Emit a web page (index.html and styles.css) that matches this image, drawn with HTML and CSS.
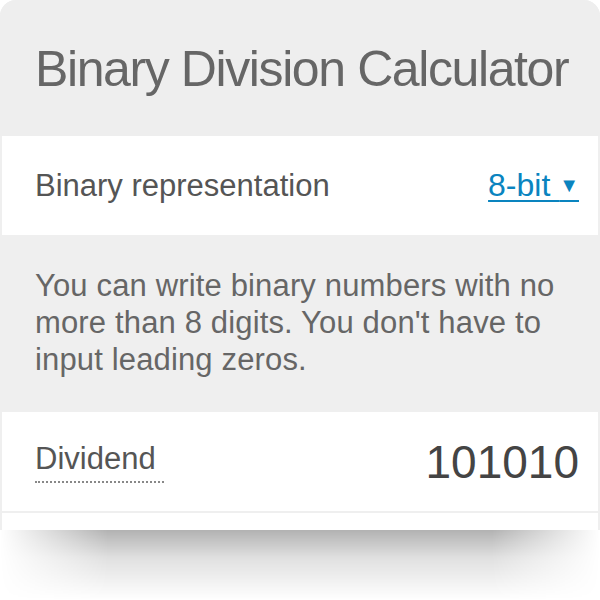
FILE: index.html
```html
<!DOCTYPE html>
<html>

<head>
	<title>Binary Division Calculator</title>
	<link rel="stylesheet" href="styles.css">
</head>

<body>
	<div class="card">
		<div class="card-header">
			<h1>Binary Division Calculator</h1>
		</div>

		<div class="row">
			<span class="label">Binary representation</span>
			<a class="select" href="#">8-bit <span class="arrow">&#9660;</span></a>
		</div>

		<div class="info">
			You can write binary numbers with no more than 8 digits. You don't have to input leading zeros.
		</div>

		<div class="row">
			<span class="label dotted">Dividend</span>
			<span class="value">101010</span>
		</div>

		<div class="row"></div>
	</div>
	<div class="card-shadow"></div>
</body>

</html>
```

FILE: styles.css
```css
body {
	margin: 0;
	padding: 0;
	background-color: #ffffff;
	font-family: Arimo, "Liberation Sans", Helvetica, Arial, sans-serif;
}

.card {
	width: 600px;
	height: 530px;
	overflow: hidden;
	background-color: #efefef;
	border-radius: 16px 16px 0 0;
}

.card-shadow {
	height: 70px;
	background: linear-gradient(rgba(0, 0, 0, 0.3), rgba(0, 0, 0, 0.12) 40%, rgba(0, 0, 0, 0) 100%);
	-webkit-mask-image: linear-gradient(to right, transparent, #000 18%, #000 82%, transparent);
	mask-image: linear-gradient(to right, transparent, #000 18%, #000 82%, transparent);
}

.card-header {
	height: 136px;
	display: flex;
	align-items: center;
	padding: 0 20px 0 35px;
	background-color: #eeeeee;
}

.card-header h1 {
	margin: 0;
	font-size: 50px;
	letter-spacing: -1.4px;
	font-weight: normal;
	color: #666666;
	padding-top: 2px;
}

.row {
	display: flex;
	justify-content: space-between;
	align-items: center;
	height: 99px;
	margin: 0 2px 2px 2px;
	padding: 0 19px 0 33px;
	background-color: #ffffff;
}

.label {
	font-size: 31px;
	color: #555555;
}

.dotted {
	padding-right: 8px;
	padding-bottom: 4px;
	border-bottom: 2px dotted #888888;
}

.select {
	font-size: 32px;
	color: #0a84bf;
	text-decoration: underline;
	text-decoration-thickness: 2px;
	text-underline-offset: 4px;
}

.arrow {
	font-size: 20px;
	vertical-align: 4px;
}

.info {
	padding: 30px 40px 34px 35px;
	font-size: 31px;
	letter-spacing: 0.15px;
	line-height: 37px;
	color: #666666;
}

.value {
	font-size: 46px;
	color: #444444;
}
```
